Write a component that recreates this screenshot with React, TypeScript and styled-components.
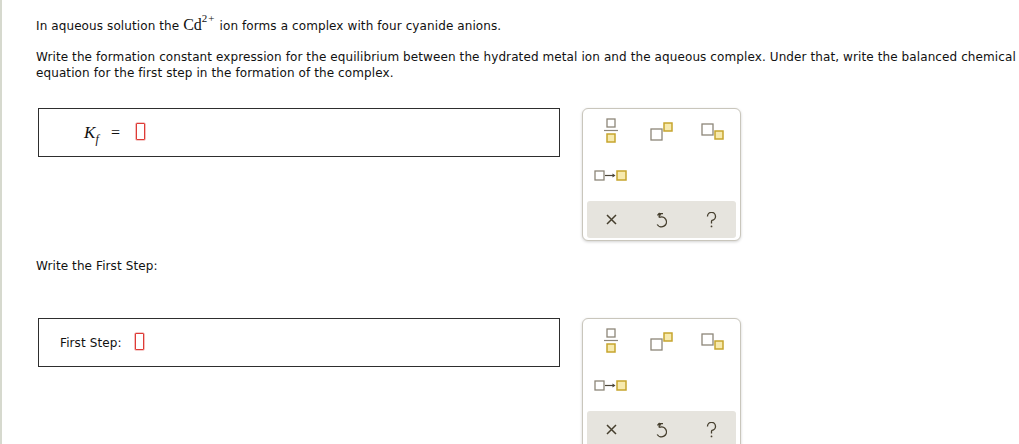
import React from 'react';
import styled, { createGlobalStyle } from 'styled-components';

const GlobalStyle = createGlobalStyle`
  html, body {
    margin: 0;
    padding: 0;
    background: #fff;
  }
  body {
    font-family: 'DejaVu Sans', Verdana, sans-serif;
    font-size: 12px;
    letter-spacing: 0.1px;
    color: #111;
  }
`;

const Page = styled.div`
  height: 444px;
  overflow: hidden;
  box-sizing: border-box;
  border-left: 2px solid #d6d9ce;
  padding: 17px 0 0 34px;
`;

const Para = styled.p<{ $top?: number }>`
  margin: ${(p) => p.$top ?? 0}px 0 0;
  line-height: 16px;
  white-space: nowrap;
`;

const Chem = styled.span`
  font-family: 'Liberation Serif', 'Times New Roman', serif;
  font-size: 16px;
  letter-spacing: 0;
`;

const Sup = styled.sup`
  font-size: 11px;
  line-height: 0;
  vertical-align: 8px;
  letter-spacing: 1px;
`;

const Row = styled.div<{ $top: number }>`
  display: flex;
  align-items: flex-start;
  gap: 22px;
  margin: ${(p) => p.$top}px 0 0 2px;
`;

const AnswerBox = styled.div<{ $pad: number; $gap: number }>`
  box-sizing: border-box;
  width: 522px;
  height: 49px;
  border: 1px solid #2e2e2e;
  display: flex;
  align-items: center;
  padding-left: ${(p) => p.$pad}px;
  gap: ${(p) => p.$gap}px;
`;

const MathVar = styled.span`
  font-family: 'Liberation Serif', 'Times New Roman', serif;
  font-style: italic;
  font-size: 17px;
  color: #111;
  sub {
    font-style: italic;
    font-size: 12px;
    vertical-align: -5px;
    line-height: 0;
  }
`;

const Equals = styled.span`
  font-family: 'Liberation Serif', 'Times New Roman', serif;
  font-size: 16px;
  margin: 0 8px 0 4px;
`;

const Slot = styled.span`
  display: inline-block;
  box-sizing: border-box;
  width: 9px;
  height: 17px;
  border: 1px solid #de3b36;
  box-shadow: 0 0 0 0.6px rgba(222, 59, 54, 0.55);
  border-radius: 1px;
  background: #fff;
  margin-top: -3px;
`;

const Label = styled.span`
  font-size: 12px;
`;

const Toolbar = styled.div`
  box-sizing: border-box;
  width: 159px;
  height: 133px;
  border: 1px solid #c9c6bc;
  border-radius: 6px;
  box-shadow: 0 1px 3px rgba(0, 0, 0, 0.18);
  padding: 3px 4px 4px;
  background: #fff;
`;

const IconGrid = styled.div`
  display: grid;
  grid-template-columns: repeat(3, 51px);
  grid-auto-rows: 38px;
  row-gap: 6px;
  margin-left: -2px;
`;

const IconCell = styled.button`
  border: 0;
  background: none;
  padding: 0;
  display: flex;
  align-items: center;
  justify-content: center;
  cursor: pointer;
`;

const Footer = styled.div`
  margin-top: 7px;
  height: 37px;
  border-radius: 3px;
  background: #e6e4de;
  display: grid;
  grid-template-columns: repeat(3, 1fr);
  align-items: center;
  justify-items: center;
  color: #463f2e;
`;

const grey = '#8d8678';
const goldStroke = '#c6a52e';
const goldFill = '#f7eaae';

const FractionIcon = () => (
  <svg width="16" height="26" viewBox="0 0 16 26">
    <rect x="4" y="1" width="8" height="8" fill="#fff" stroke={grey} strokeWidth="1.3" />
    <line x1="1" y1="12.5" x2="15" y2="12.5" stroke={grey} strokeWidth="1.2" />
    <rect x="4" y="16" width="8" height="8" fill={goldFill} stroke={goldStroke} strokeWidth="1.5" />
  </svg>
);

const SuperIcon = () => (
  <svg width="23" height="19" viewBox="0 0 23 19">
    <rect x="1" y="7" width="11" height="11" fill="#fff" stroke={grey} strokeWidth="1.3" />
    <rect x="14" y="1" width="8" height="8" fill={goldFill} stroke={goldStroke} strokeWidth="1.5" />
  </svg>
);

const SubIcon = () => (
  <svg width="23" height="17" viewBox="0 0 23 17">
    <rect x="1" y="1" width="11" height="11" fill="#fff" stroke={grey} strokeWidth="1.3" />
    <rect x="14" y="8" width="8" height="8" fill={goldFill} stroke={goldStroke} strokeWidth="1.5" />
  </svg>
);

const ArrowIcon = () => (
  <svg width="33" height="11" viewBox="0 0 33 11">
    <rect x="1" y="1" width="9" height="9" fill="#fff" stroke={grey} strokeWidth="1.3" />
    <line x1="11" y1="5.5" x2="20" y2="5.5" stroke="#4a4437" strokeWidth="1.2" />
    <path d="M18.5 3.5 L21.5 5.5 L18.5 7.5 Z" fill="#4a4437" />
    <rect x="23" y="1" width="9" height="9" fill={goldFill} stroke={goldStroke} strokeWidth="1.5" />
  </svg>
);

const CloseIcon = () => (
  <svg width="11" height="11" viewBox="0 0 11 11">
    <path d="M1 1 L10 10 M10 1 L1 10" stroke="currentColor" strokeWidth="1.5" />
  </svg>
);

const UndoIcon = () => (
  <svg width="13" height="16" viewBox="0 0 13 16">
    <path
      d="M4.2 5.4 A5 5 0 1 1 2.2 12.5"
      fill="none"
      stroke="currentColor"
      strokeWidth="1.4"
    />
    <path d="M4.2 5.6 L4.2 1.6 M4.2 1.6 L8 1.6" fill="none" stroke="currentColor" strokeWidth="1.4" />
    <path d="M2.4 3.4 L4.2 1.4 L6 3.4" fill="none" stroke="currentColor" strokeWidth="1.2" />
  </svg>
);

const HelpIcon = () => (
  <svg width="11" height="16" viewBox="0 0 11 16">
    <path
      d="M1.5 4.5 A4 4 0 1 1 6 8.3 Q5.5 8.6 5.5 9.5 L5.5 11.5"
      fill="none"
      stroke="currentColor"
      strokeWidth="1.3"
    />
    <circle cx="5.5" cy="14.4" r="0.9" fill="currentColor" />
  </svg>
);

const EditorToolbar: React.FC = () => (
  <Toolbar>
    <IconGrid>
      <IconCell aria-label="fraction">
        <FractionIcon />
      </IconCell>
      <IconCell aria-label="superscript">
        <SuperIcon />
      </IconCell>
      <IconCell aria-label="subscript">
        <SubIcon />
      </IconCell>
      <IconCell aria-label="reaction arrow">
        <ArrowIcon />
      </IconCell>
    </IconGrid>
    <Footer>
      <CloseIcon />
      <UndoIcon />
      <HelpIcon />
    </Footer>
  </Toolbar>
);

const App: React.FC = () => {
  return (
    <>
      <GlobalStyle />
      <Page>
        <Para>
          In aqueous solution the{' '}
          <Chem>
            Cd<Sup>2+</Sup>
          </Chem>{' '}
          ion forms a complex with four cyanide anions.
        </Para>
        <Para $top={15}>
          Write the formation constant expression for the equilibrium between the hydrated metal ion
          and the aqueous complex. Under that, write the balanced chemical
          <br />
          equation for the first step in the formation of the complex.
        </Para>

        <Row $top={27}>
          <AnswerBox $pad={45} $gap={8}>
            <MathVar>
              K<sub>f</sub>
            </MathVar>
            <Equals>=</Equals>
            <Slot />
          </AnswerBox>
          <EditorToolbar />
        </Row>

        <Para $top={17}>Write the First Step:</Para>

        <Row $top={44}>
          <AnswerBox $pad={21} $gap={13}>
            <Label>First Step:</Label>
            <Slot />
          </AnswerBox>
          <EditorToolbar />
        </Row>
      </Page>
    </>
  );
};

export default App;
